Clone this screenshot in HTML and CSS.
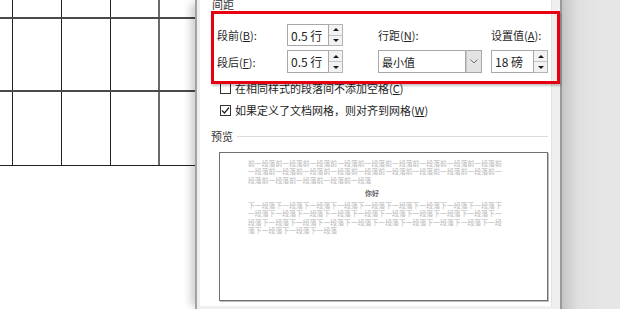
FILE: index.html
```html
<!DOCTYPE html>
<html lang="zh-CN">
<head>
    <meta charset="UTF-8">
    <meta name="viewport" content="width=device-width, initial-scale=1.0">
    <title>段落 - 间距</title>
    <link rel="stylesheet" href="styles.css">
</head>
<body>

<div class="screen">

    <!-- Document behind the dialog -->
    <div class="doc">
        <div class="sheet">
            <div class="trow"><span class="cell"></span><span class="cell"></span><span class="cell"></span><span class="cell thick"></span><span class="cell"></span></div>
            <div class="trow mid"><span class="cell"></span><span class="cell"></span><span class="cell"></span><span class="cell thick"></span><span class="cell"></span></div>
            <div class="trow last"><span class="cell"></span><span class="cell"></span><span class="cell"></span><span class="cell thick"></span><span class="cell"></span></div>
        </div>
    </div>

    <!-- Paragraph dialog -->
    <div class="dialog">
        <div class="panel">
            <div class="legend">间距</div>

            <div class="spacing">
                <span class="lbl">段前(<u>B</u>):</span>
                <div class="spin">
                    <span class="field">0.5 行</span>
                    <span class="arrows"><i class="up"></i><i class="down"></i></span>
                </div>
                <span class="lbl">行距(<u>N</u>):</span>
                <span class="lbl">设置值(<u>A</u>):</span>

                <span class="lbl">段后(<u>F</u>):</span>
                <div class="spin">
                    <span class="field">0.5 行</span>
                    <span class="arrows"><i class="up"></i><i class="down"></i></span>
                </div>
                <div class="select">
                    <span class="field small">最小值</span>
                    <span class="drop">
                        <svg width="8" height="5" viewBox="0 0 8 5"><polyline points="0.5,0.5 4,4 7.5,0.5" fill="none" stroke="#707070" stroke-width="1"/></svg>
                    </span>
                </div>
                <div class="spin wide">
                    <span class="field">18 磅</span>
                    <span class="arrows"><i class="up"></i><i class="down"></i></span>
                </div>
            </div>

            <div class="check first">
                <span class="box"></span>
                <span>在相同样式的段落间不添加空格(<u>C</u>)</span>
            </div>
            <div class="check">
                <span class="box">
                    <svg width="9" height="9" viewBox="0 0 9 9"><polyline points="1,4.5 3.5,7 8,1.5" fill="none" stroke="#222" stroke-width="1.2"/></svg>
                </span>
                <span>如果定义了文档网格，则对齐到网格(<u>W</u>)</span>
            </div>

            <div class="legend ruled">预览</div>

            <div class="preview">
                <div class="pv-text">
                    <div>前一段落前一段落前一段落前一段落前一段落前一段落前一段落前一段落前一段落前</div>
                    <div>一段落前一段落前一段落前一段落前一段落前一段落前一段落前一段落前一段落前一</div>
                    <div>段落前一段落前一段落前一段落前一段落</div>
                </div>
                <div class="pv-title">你好</div>
                <div class="pv-text">
                    <div>下一段落下一段落下一段落下一段落下一段落下一段落下一段落下一段落下一段落下</div>
                    <div>一段落下一段落下一段落下一段落下一段落下一段落下一段落下一段落下一段落下一</div>
                    <div>段落下一段落下一段落下一段落下一段落下一段落下一段落下一段落下一段落下一段</div>
                    <div>落下一段落下一段落下一段落</div>
                </div>
            </div>
        </div>

        <!-- Red annotation frame -->
        <div class="mark"></div>
    </div>

    <div class="desk"></div>
</div>

</body>
</html>
```

FILE: styles.css
```css
body {
    margin: 0;
    padding: 0;
    font-family: "Noto Sans CJK SC", "Noto Sans", sans-serif;
    color: #1f1f1f;
    background: #fff;
}
.screen {
    display: flex;
    width: 620px;
    height: 309px;
    overflow: hidden;
}

/* document table */
.doc {
    width: 195px;
    flex: none;
    overflow: hidden;
    background: #fff;
}
.sheet {
    margin-left: -36px;
    margin-top: -55px;
    width: 245px;
}
.trow {
    display: flex;
    height: 74px;
    box-sizing: border-box;
    border-bottom: 2px solid #4a4a4a;
}
.trow.mid {
    height: 73px;
}
.trow.last {
    border-bottom: 1px solid #222;
    height: 74px;
}
.cell {
    width: 49px;
    flex: none;
    box-sizing: border-box;
    border-right: 1px solid #222;
}
.cell.thick {
    border-right: 2px solid #6a6a6a;
}

/* dialog window */
.dialog {
    position: relative;
    width: 367px;
    flex: none;
    box-sizing: border-box;
    border-left: 2px solid #a3a3a3;
    border-right: 2px solid #9a9a9a;
    padding: 0 8px 0 3px;
    background: #efefef;
    box-shadow: -7px 0 8px -3px rgba(0,0,0,0.2);
}
.panel {
    width: 352px;
    height: 100%;
    box-sizing: border-box;
    background: #fff;
    border-right: 1px solid #e2e2e2;
    font-size: 11px;
}
.legend {
    display: flex;
    align-items: center;
    margin: -3px 0 0 12px;
    height: 14px;
    line-height: 14px;
    color: #333;
}
.legend.ruled {
    margin: 7px 3px 0 11px;
    height: 16px;
    line-height: 16px;
}
.legend.ruled::after {
    content: "";
    flex: 1;
    height: 1px;
    margin-left: 4px;
    background: #dcdcdc;
}

.spacing {
    display: grid;
    grid-template-columns: 70px 91px 113px 57px;
    grid-template-rows: 22px 23px;
    row-gap: 4px;
    margin: 13px 0 0 17px;
    align-items: center;
}
.lbl {
    line-height: 14px;
}
u {
    text-underline-offset: 1px;
}
.spin, .select {
    display: flex;
    align-self: stretch;
    width: 56px;
}
.spin.wide {
    width: 57px;
}
.field {
    flex: 1;
    display: flex;
    align-items: center;
    padding-left: 3px;
    border: 1px solid #a8a8a8;
    background: #fff;
    font-size: 12px;
    color: #222;
}
.field.small {
    font-size: 11px;
    padding-left: 3px;
}
.arrows {
    width: 13px;
    display: flex;
    flex-direction: column;
    border: 1px solid #b4b4b4;
    border-left: none;
    background: #f2f2f2;
}
.arrows i {
    flex: 1;
    display: flex;
    align-items: center;
    justify-content: center;
}
.arrows i + i {
    border-top: 1px solid #c4c4c4;
}
.arrows i::before {
    content: "";
    border-left: 3px solid transparent;
    border-right: 3px solid transparent;
}
.arrows .up::before {
    border-bottom: 3px solid #1a1a1a;
}
.arrows .down::before {
    border-top: 3px solid #1a1a1a;
}
.select {
    width: 104px;
}
.drop {
    width: 14px;
    display: flex;
    align-items: center;
    justify-content: center;
    border: 1px solid #a8a8a8;
    border-left: 1px solid #c6c6c6;
    background: #e3e3e3;
}

.check {
    display: flex;
    align-items: center;
    height: 22px;
    margin-left: 20px;
    gap: 4px;
    line-height: 14px;
}
.check.first {
    margin-top: 4px;
}
.box {
    width: 11px;
    height: 11px;
    box-sizing: border-box;
    border: 1px solid #333;
    display: flex;
    align-items: center;
    justify-content: center;
    flex: none;
}

.preview {
    margin: 8px 3px 0 19px;
    height: 149px;
    box-sizing: border-box;
    border: 1px solid #707070;
    box-shadow: 1px 1px 0 #bcbcbc;
    padding-top: 5.5px;
}
.pv-text {
    margin-left: 28px;
    width: 254px;
    font-size: 6.86px;
    line-height: 8.5px;
    color: #b8b8b8;
    white-space: nowrap;
    overflow: hidden;
}
.pv-title {
    margin: 4.5px 0 3.5px 28px;
    width: 248px;
    text-align: center;
    font-size: 7px;
    line-height: 8.5px;
    font-weight: bold;
    color: #666;
}

/* red frame drawn on top of the spacing group */
.mark {
    position: absolute;
    left: 14px;
    top: 11px;
    width: 349px;
    height: 73px;
    box-sizing: border-box;
    border: 3px solid #e60012;
    box-shadow: 1px 2px 2px rgba(0,0,0,0.22);
}

.desk {
    flex: 1;
    background: linear-gradient(to right, #c4c4c4, #e0e0e0 16px, #e6e6e6 40px);
}
```
